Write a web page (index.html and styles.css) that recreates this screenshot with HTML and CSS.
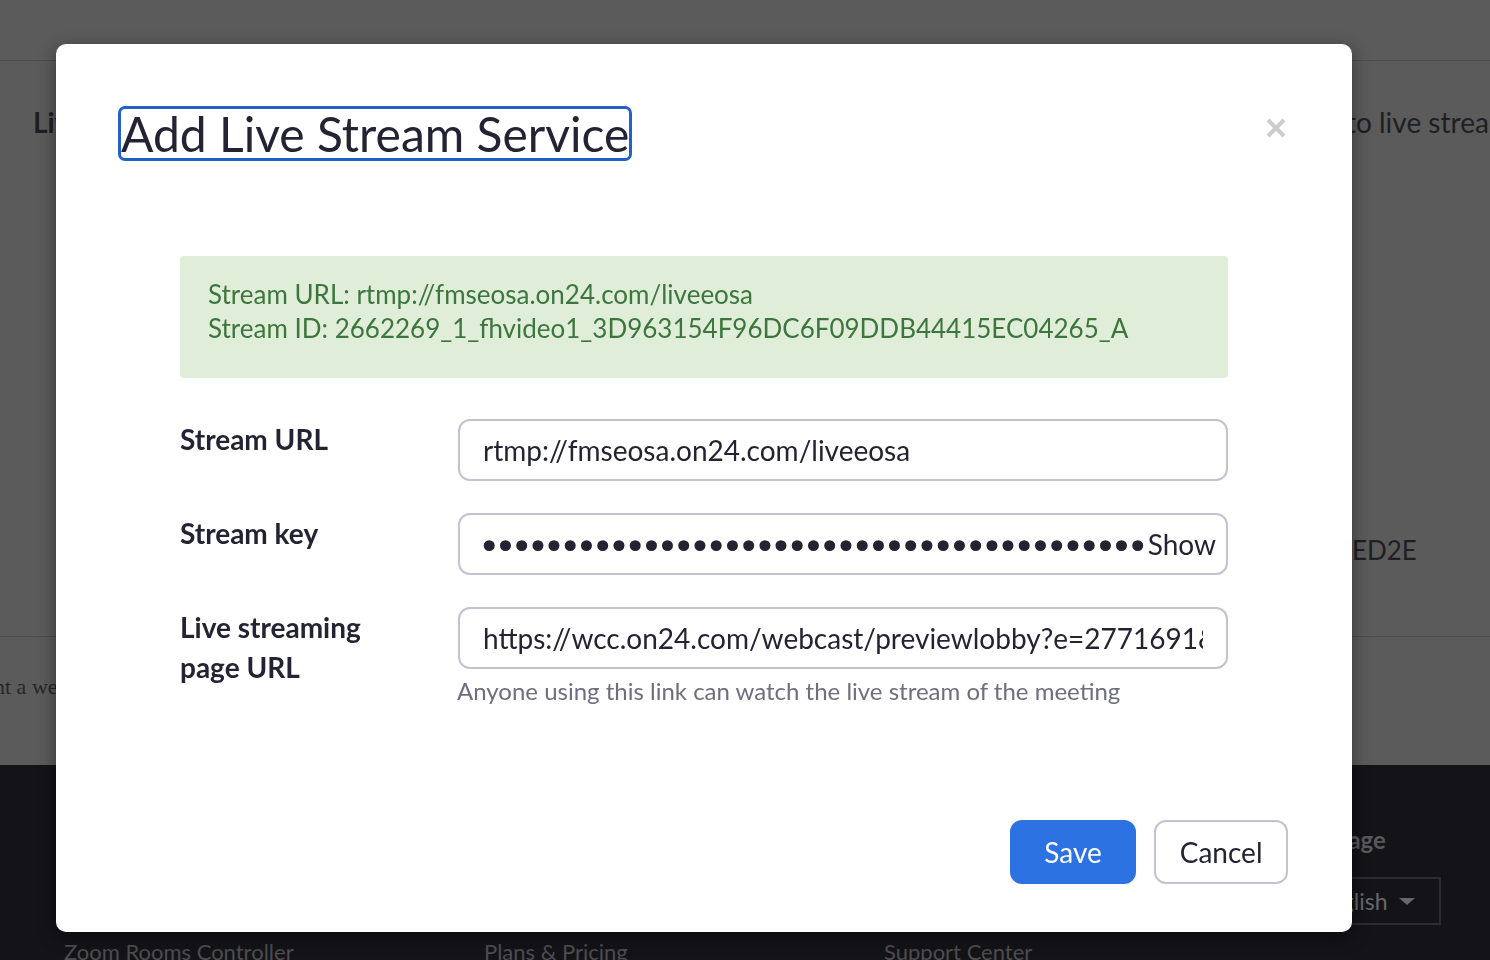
FILE: index.html
```html
<!DOCTYPE html>
<html lang="en">
<head>
<meta charset="utf-8">
<title>Add Live Stream Service</title>
<link rel="stylesheet" href="styles.css">
</head>
<body>
<div class="page">
  <header class="bg-top"></header>
  <section class="bg-main">
    <div class="bg-row bg-row-head">
      <h2 class="bg-title">Live Streaming Meetings</h2>
      <p class="bg-desc">to live stream meetings</p>
    </div>
    <div class="bg-row bg-row-key">
      <span></span>
      <p class="bg-desc bg-key">ED2E</p>
    </div>
  </section>
  <section class="bg-sub">
    <p class="bg-serif">nt a webinar</p>
  </section>
  <footer class="bg-foot">
    <div class="foot-col">
      <h4 class="foot-head">Download</h4>
      <span class="foot-link">Meetings Client</span>
      <span class="foot-link foot-link-last">Zoom Rooms Controller</span>
    </div>
    <div class="foot-col">
      <h4 class="foot-head">Sales</h4>
      <span class="foot-link">Contact Sales</span>
      <span class="foot-link foot-link-last">Plans &amp; Pricing</span>
    </div>
    <div class="foot-col">
      <h4 class="foot-head">Support</h4>
      <span class="foot-link">Account</span>
      <span class="foot-link foot-link-last">Support Center</span>
    </div>
    <div class="foot-col">
      <h4 class="foot-head">Language</h4>
      <div class="lang-box">English <span class="caret"></span></div>
    </div>
  </footer>
</div>

<div class="modal" role="dialog">
  <div class="modal-header">
    <h1 class="modal-title">Add Live Stream Service</h1>
    <button class="close" aria-label="Close">
      <svg width="20" height="20" viewBox="0 0 20 20"><path d="M2 2 L18 18 M18 2 L2 18" stroke="#cccccc" stroke-width="4"/></svg>
    </button>
  </div>
  <div class="modal-body">
    <div class="alert">
      <div>Stream URL: rtmp://fmseosa.on24.com/liveeosa</div>
      <div>Stream ID: 2662269_1_fhvideo1_3D963154F96DC6F09DDB44415EC04265_A</div>
    </div>
    <div class="form">
      <label class="label">Stream URL</label>
      <div class="field">
        <input class="input" type="text" value="rtmp://fmseosa.on24.com/liveeosa">
      </div>
      <label class="label">Stream key</label>
      <div class="field">
        <div class="input input-key"><span class="dots">•••••••••••••••••••••••••••••••••••••••••</span><span class="show">Show</span></div>
      </div>
      <label class="label">Live streaming<br>page URL</label>
      <div class="field">
        <input class="input" type="text" value="https://wcc.on24.com/webcast/previewlobby?e=2771691&amp;k=5A9B0C">
        <p class="help">Anyone using this link can watch the live stream of the meeting</p>
      </div>
    </div>
  </div>
  <div class="modal-footer">
    <button class="btn btn-primary">Save</button>
    <button class="btn btn-default">Cancel</button>
  </div>
</div>
</body>
</html>
```

FILE: styles.css
```css
* { box-sizing: border-box; }

html, body {
  margin: 0;
  padding: 0;
  height: 100%;
  overflow: hidden;
}

body {
  font-family: Lato, "Open Sans", "Liberation Sans", sans-serif;
  background: #5b5b5b;
  color: #232333;
}

/* ---------- dimmed page behind ---------- */
.page {
  width: 1490px;
  height: 960px;
  overflow: hidden;
  display: flex;
  flex-direction: column;
}

.bg-top {
  height: 61px;
  flex: none;
  border-bottom: 1px solid #4c4c4c;
}

.bg-main {
  height: 576px;
  flex: none;
  border-bottom: 1px solid #4c4c4c;
  padding-top: 41px;
  display: flex;
  flex-direction: column;
}

.bg-row {
  display: grid;
  grid-template-columns: 1346px 1fr;
  white-space: nowrap;
  overflow: hidden;
}

.bg-row-head { height: 40px; }
.bg-row-key {
  margin-top: 388px;
  height: 40px;
  grid-template-columns: 1352px 1fr;
}

.bg-title {
  margin: 0;
  padding-left: 33px;
  font-size: 28px;
  line-height: 40px;
  font-weight: 700;
  color: #1f1f23;
}

.bg-desc {
  margin: 0;
  font-size: 28px;
  line-height: 40px;
  color: #1f1f23;
}

.bg-key { font-size: 26px; }

.bg-sub {
  height: 128px;
  flex: none;
  padding-top: 38px;
}

.bg-serif {
  margin: 0;
  font-family: "Liberation Serif", serif;
  font-size: 22px;
  line-height: 24px;
  color: #262628;
  text-indent: -6px;
  white-space: nowrap;
}

.bg-foot {
  flex: 1;
  background: #141418;
  display: grid;
  grid-template-columns: 420px 400px 400px 1fr;
  padding: 59px 0 0 64px;
}

.foot-col {
  display: flex;
  flex-direction: column;
  align-items: flex-start;
}

.foot-head {
  margin: 0;
  font-size: 24px;
  line-height: 32px;
  font-weight: 700;
  color: #58585d;
  white-space: nowrap;
}

.foot-link {
  margin-top: 20px;
  font-size: 22px;
  line-height: 28px;
  color: #4d4d52;
  white-space: nowrap;
}

.foot-link-last { margin-top: 34px; }

.lang-box {
  margin-top: 21px;
  width: 157px;
  height: 48px;
  border: 2px solid #2c2c31;
  padding-left: 30px;
  display: flex;
  align-items: center;
  gap: 11px;
  font-size: 23px;
  color: #67676c;
  white-space: nowrap;
}

.caret {
  flex: none;
  width: 0;
  height: 0;
  border-left: 8px solid transparent;
  border-right: 8px solid transparent;
  border-top: 7px solid #67676c;
}

/* ---------- modal ---------- */
.modal {
  position: fixed;
  left: 56px;
  top: 44px;
  width: 1296px;
  height: 888px;
  background: #ffffff;
  border-radius: 10px;
  box-shadow: 0 5px 18px rgba(0, 0, 0, 0.45);
  display: flex;
  flex-direction: column;
}

.modal-header {
  display: flex;
  justify-content: space-between;
  align-items: flex-start;
  padding: 65px 66px 0 65px;
}

.modal-title {
  margin: 0;
  font-size: 48px;
  line-height: 49px;
  font-weight: 400;
  color: #232333;
  outline: 3px solid #2461c6;
  border-radius: 4px;
}

.close {
  margin-top: 9px;
  padding: 0;
  border: 0;
  background: none;
  width: 20px;
  height: 20px;
  display: block;
}

.close svg { display: block; }

.modal-body {
  margin-top: 98px;
  padding: 0 124px;
}

.alert {
  background: #e0eed9;
  color: #3c763d;
  border-radius: 4px;
  padding: 21px 28px 33px;
  font-size: 26px;
  line-height: 34px;
}

.form {
  margin-top: 41px;
  display: grid;
  grid-template-columns: 278px minmax(0, 1fr);
  row-gap: 32px;
}

.label {
  font-size: 28px;
  line-height: 40px;
  font-weight: 700;
  color: #232333;
}

.field {
  min-width: 0;
  display: flex;
  flex-direction: column;
}

.input {
  width: 100%;
  height: 62px;
  border: 2px solid #c2c2d2;
  border-radius: 12px;
  padding: 0 23px;
  font-family: Lato, "Open Sans", "Liberation Sans", sans-serif;
  font-size: 28px;
  color: #232333;
  background: #ffffff;
  outline: none;
}

.input-key {
  display: flex;
  align-items: center;
  padding: 0 10px 0 18px;
  overflow: hidden;
}

.dots {
  flex: none;
  font-family: "DejaVu Sans", sans-serif;
  font-size: 38px;
  line-height: 52px;
  padding-top: 6px;
  letter-spacing: -6.2px;
  color: #232333;
  white-space: nowrap;
}

.show {
  flex: none;
  margin-left: auto;
  font-size: 28px;
  color: #232333;
}

.help {
  margin: 8px 0 0 -1px;
  font-size: 24px;
  line-height: 28px;
  color: #6e6e7e;
}

.modal-footer {
  margin-top: auto;
  padding: 0 64px 48px;
  display: flex;
  justify-content: flex-end;
  gap: 18px;
}

.btn {
  height: 64px;
  border-radius: 12px;
  font-family: Lato, "Open Sans", "Liberation Sans", sans-serif;
  font-size: 28px;
  cursor: pointer;
}

.btn-primary {
  background: #2d72e2;
  border: 2px solid #2d72e2;
  color: #ffffff;
  padding: 0 32.5px;
}

.btn-default {
  background: #ffffff;
  border: 2px solid #c2c2d2;
  color: #232333;
  padding: 0 23.5px;
}
```
